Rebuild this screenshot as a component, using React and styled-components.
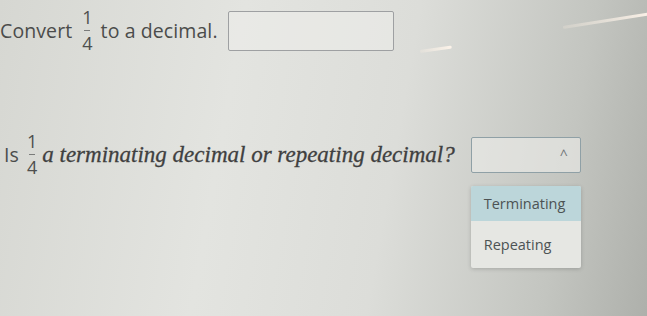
import React from 'react'
import styled, { createGlobalStyle } from 'styled-components'

const Global = createGlobalStyle`
  html, body {
    margin: 0;
    padding: 0;
  }
  body {
    width: 647px;
    height: 316px;
    overflow: hidden;
    background: linear-gradient(100deg, #d6d7d2 0%, #e3e4e0 35%, #dcddd9 60%, #c3c5c0 85%, #aeb0ab 100%);
    font-family: 'Open Sans', 'Noto Sans', sans-serif;
    color: #4b4c4b;
  }
`

const Page = styled.div`
  position: relative;
  width: 647px;
  height: 316px;
  padding: 8px 0 0 0;
  box-sizing: border-box;
`

const Row = styled.div`
  display: flex;
  align-items: center;
  padding-left: ${({ indent }) => indent || 0}px;
  margin-top: ${({ top }) => top || 0}px;
`

const Word = styled.span`
  font-size: 19.5px;
  letter-spacing: 0.1px;
`

const Frac = styled.span`
  display: inline-flex;
  flex-direction: column;
  align-items: center;
  font-family: 'Open Sans', sans-serif;
  font-size: 18px;
  line-height: 19px;
  color: #4e4f4e;
  margin: 0 ${({ gap }) => gap || 6}px 0 ${({ lead }) => lead || 6}px;
`

const Bar = styled.span`
  width: 6px;
  height: 1px;
  background: #7a7b7a;
  margin: 3px 0;
`

const Math = styled.span`
  font-family: 'Liberation Serif', 'DejaVu Serif', serif;
  font-style: italic;
  font-size: 23px;
  color: #3f4040;
  -webkit-text-stroke: 0.3px #3f4040;
`

const Input = styled.div`
  width: 166px;
  height: 40px;
  box-sizing: border-box;
  border: 1.5px solid #9ea0a2;
  border-radius: 2px;
  background: rgba(236, 237, 234, 0.6);
  margin-left: 10px;
`

const SelectWrap = styled.div`
  position: relative;
  margin-left: 16px;
`

const Select = styled.div`
  width: 110px;
  height: 36px;
  box-sizing: border-box;
  border: 1.5px solid #8fa0a6;
  border-radius: 2px;
  background: rgba(236, 237, 234, 0.6);
  display: flex;
  align-items: center;
  justify-content: flex-end;
  padding-right: 12px;
  font-size: 14px;
  color: #6f7476;
`

const Menu = styled.div`
  position: absolute;
  top: 49px;
  left: 0;
  width: 110px;
  background: #e6e7e3;
  box-shadow: 0 1px 4px rgba(0, 0, 0, 0.18);
  border-radius: 2px;
  overflow: hidden;
`

const Option = styled.div`
  height: ${({ h }) => h}px;
  display: flex;
  align-items: center;
  padding-left: 13px;
  font-size: 14.5px;
  color: #4d5354;
  background: ${({ active }) => (active ? '#bcd6da' : 'transparent')};
`

const Glare = styled.div`
  position: absolute;
  height: 3px;
  border-radius: 2px;
  background: linear-gradient(90deg, rgba(255, 240, 225, 0.2), rgba(255, 245, 235, 0.95));
  transform-origin: left center;
`

export default function App() {
  return (
    <Page>
      <Global />
      <Row>
        <Word>Convert</Word>
        <Frac lead={10} gap={8}>
          <span>1</span>
          <Bar />
          <span>4</span>
        </Frac>
        <Word>to a decimal.</Word>
        <Input />
      </Row>

      <Row indent={4} top={79}>
        <Word>Is</Word>
        <Frac lead={8} gap={5}>
          <span>1</span>
          <Bar />
          <span>4</span>
        </Frac>
        <Math>a terminating decimal or repeating decimal?</Math>
        <SelectWrap>
          <Select>^</Select>
          <Menu>
            <Option active h={35}>Terminating</Option>
            <Option h={47}>Repeating</Option>
          </Menu>
        </SelectWrap>
      </Row>

      <Glare style={{ left: 563, top: 26, width: 90, transform: 'rotate(-9deg)' }} />
      <Glare style={{ left: 420, top: 50, width: 32, transform: 'rotate(-8deg)' }} />
    </Page>
  )
}
